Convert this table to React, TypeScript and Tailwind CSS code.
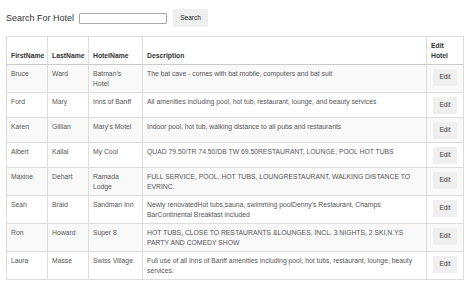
import React from "react";

const rows: [string, string, string, string][] = [
  ["Bruce", "Ward", "Batman's Hotel", "The bat cave - comes with bat mobile, computers and bat suit"],
  ["Ford", "Mary", "Inns of Banff", "All amenities including pool, hot tub, restaurant, lounge, and beauty services"],
  ["Karen", "Gillian", "Mary's Motel", "Indoor pool, hot tub, walking distance to all pubs and restaurants"],
  ["Albert", "Kallal", "My Cool", "QUAD 79.50/TR 74.50/DB TW 69.50RESTAURANT, LOUNGE, POOL HOT TUBS"],
  ["Maxine", "Dehart", "Ramada Lodge", "FULL SERVICE, POOL, HOT TUBS, LOUNGRESTAURANT, WALKING DISTANCE TO EVRINC."],
  ["Sean", "Braid", "Sandman Inn", "Newly renovatedHot tubs,sauna, swimming poolDenny's Restaurant, Champs BarContinental Breakfast included"],
  ["Ron", "Howard", "Super 8", "HOT TUBS, CLOSE TO RESTAURANTS &LOUNGES, INCL. 3 NIGHTS, 2 SKI,N.YS PARTY AND COMEDY SHOW"],
  ["Laura", "Masse", "Swiss Village", "Full use of all Inns of Banff amenities including pool, hot tubs, restaurant, lounge, beauty services."],
];

export default function App() {
  return (
    <div
      className="w-[474px] h-[291px] bg-white text-[#333] overflow-hidden"
      style={{ fontFamily: '"Liberation Sans", Arial, sans-serif' }}
    >
      <div className="flex items-center pl-[6px] pt-[9px] h-[27px]">
        <span className="text-[9px] leading-[10px] w-[73px]">Search For Hotel</span>
        <input
          type="text"
          className="w-[88px] h-[11px] border border-[#a9a9a9] rounded-[1px] bg-white"
        />
        <button className="ml-[6px] w-[35px] h-[18px] bg-[#efefef] text-[6.5px] text-[#222] rounded-[1px]">
          Search
        </button>
      </div>
      <table className="ml-[6px] mt-[9px] table-fixed border-collapse w-[457px] text-[6.8px] leading-[10px]">
        <colgroup>
          <col className="w-[41px]" />
          <col className="w-[41px]" />
          <col className="w-[54px]" />
          <col className="w-[284px]" />
          <col className="w-[37px]" />
        </colgroup>
        <thead>
          <tr className="text-[#333]">
            {["FirstName", "LastName", "HotelName", "Description", "Edit Hotel"].map((h) => (
              <th
                key={h}
                className="border border-[#ddd] border-b-[#ccc] px-[4px] py-[3.5px] text-left align-bottom font-bold"
              >
                {h}
              </th>
            ))}
          </tr>
        </thead>
        <tbody className="text-[#555]">
          {rows.map((r, idx) => (
            <tr key={r[0]} className={idx % 2 === 0 ? "bg-[#f9f9f9]" : "bg-white"}>
              <td className="border border-[#ddd] px-[4px] py-[3.5px] align-top">{r[0]}</td>
              <td className="border border-[#ddd] px-[4px] py-[3.5px] align-top">{r[1]}</td>
              <td className="border border-[#ddd] px-[4px] py-[3.5px] align-top">{r[2]}</td>
              <td className="border border-[#ddd] px-[4px] py-[3.5px] align-top">{r[3]}</td>
              <td className="border border-[#ddd] px-[4px] py-[3.5px] align-top">
                <button className="mx-auto block w-[24px] h-[17px] bg-[#efefef] text-[6.5px] text-[#444] rounded-[1px]">
                  Edit
                </button>
              </td>
            </tr>
          ))}
        </tbody>
      </table>
    </div>
  );
}
